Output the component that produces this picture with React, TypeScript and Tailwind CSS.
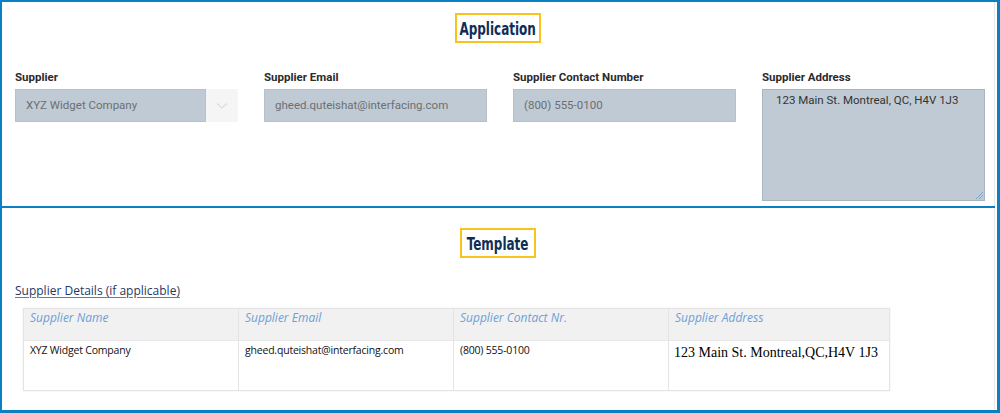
import React from "react";

const fields = [
  { label: "Supplier", value: "XYZ Widget Company", kind: "select" },
  { label: "Supplier Email", value: "gheed.quteishat@interfacing.com", kind: "input" },
  { label: "Supplier Contact Number", value: "(800) 555-0100", kind: "input" },
  { label: "Supplier Address", value: "123 Main St. Montreal, QC, H4V 1J3", kind: "textarea" },
];

const columns = [
  { head: "Supplier Name", value: "XYZ Widget Company", w: "w-[214px]" },
  { head: "Supplier Email", value: "gheed.quteishat@interfacing.com", w: "w-[215px]" },
  { head: "Supplier Contact Nr.", value: "(800) 555-0100", w: "w-[215px]" },
  { head: "Supplier Address", value: "123 Main St. Montreal,QC,H4V 1J3", w: "w-[221px]", serif: true },
];

function TitleBox({ children, w }: { children: React.ReactNode; w: string }) {
  return (
    <div className="flex justify-center">
      <div className={`${w} h-[30px] border-2 border-[#f7c31c] flex items-center justify-center`}>
        <span
          className="inline-block whitespace-nowrap scale-x-[0.74] text-[18px] font-bold text-[#0f2e55]"
          style={{ fontFamily: '"DejaVu Sans Condensed", "DejaVu Sans", sans-serif' }}
        >
          {children}
        </span>
      </div>
    </div>
  );
}

function Field({ f }: { f: (typeof fields)[number] }) {
  return (
    <div className="w-[223px] flex flex-col">
      <div className="text-[11.5px] leading-[14px] font-bold text-[#2b2b2b] mb-[5px]">{f.label}</div>
      {f.kind === "select" && (
        <div className="flex h-[33px]">
          <div className="flex-1 bg-[#c0cad4] border border-[#b7c1cb] flex items-center pl-[10px] text-[11.5px] text-[#6b6f73]">
            {f.value}
          </div>
          <div className="w-[32px] bg-[#f5f5f5] flex items-center justify-center">
            <svg width="12" height="8" viewBox="0 0 12 8" fill="none">
              <path d="M1 1.5 6 6l5-4.5" stroke="#dcdcdc" strokeWidth="1.2" />
            </svg>
          </div>
        </div>
      )}
      {f.kind === "input" && (
        <div className="h-[33px] bg-[#c0cad4] border border-[#b7c1cb] flex items-center pl-[10px] text-[11.5px] text-[#6b6f73]">
          {f.value}
        </div>
      )}
      {f.kind === "textarea" && (
        <div className="relative h-[112px] bg-[#c0cad4] border border-[#a9b4bf] pl-[13px] pt-[2px] text-[11.5px] text-[#333]">
          {f.value}
          <svg className="absolute right-[1px] bottom-[1px]" width="7" height="7" viewBox="0 0 7 7">
            <path d="M7 0 0 7M7 3 3 7" stroke="#7aa6d6" strokeWidth="1" />
          </svg>
        </div>
      )}
    </div>
  );
}

export default function App() {
  return (
    <div
      className="w-[1000px] h-[413px] bg-white border-l-2 border-t-2 border-r-[3px] border-b-[3px] border-[#0a7fc3] flex flex-col overflow-hidden"
      style={{ fontFamily: "Roboto, sans-serif" }}
    >
      <div className="h-[204px] pt-[11px] border-r border-[#e6e6e6] mr-[2px]">
        <TitleBox w="w-[86px]">Application</TitleBox>
        <div className="flex gap-[26px] pl-[13px] mt-[27px]">
          {fields.map((f) => (
            <Field key={f.label} f={f} />
          ))}
        </div>
      </div>
      <div className="h-[2px] bg-[#0a7fc3] mr-[2px]" />
      <div className="flex-1 pt-[20px] border-r border-[#e6e6e6] mr-[2px]" style={{ fontFamily: '"Open Sans", sans-serif' }}>
        <TitleBox w="w-[76px]">Template</TitleBox>
        <div className="pl-[13px] mt-[25px] text-[12px] leading-[16px] text-[#1f3864] underline underline-offset-2 decoration-[#6c7a96]">
          Supplier Details (if applicable)
        </div>
        <div className="ml-[21px] mt-[9px] flex w-fit border border-[#e4e4e4] shadow-[0_0_2px_rgba(0,0,0,0.08)]">
          {columns.map((c, i) => (
            <div key={c.head} className={`${c.w} flex flex-col ${i > 0 ? "border-l border-[#e4e4e4]" : ""}`}>
              <div className="h-[32px] bg-[#f1f1f1] border-b border-[#e8e8e8] px-[6px] text-[12px] italic text-[#6d9fd6]">
                {c.head}
              </div>
              <div
                className={
                  c.serif
                    ? "h-[49px] px-[5px] pt-[1px] text-[14px] text-black"
                    : "h-[49px] px-[6px] pt-[2px] text-[10.5px] text-[#111] tracking-[-0.2px]"
                }
                style={c.serif ? { fontFamily: '"Liberation Serif", serif' } : undefined}
              >
                {c.value}
              </div>
            </div>
          ))}
        </div>
      </div>
    </div>
  );
}
